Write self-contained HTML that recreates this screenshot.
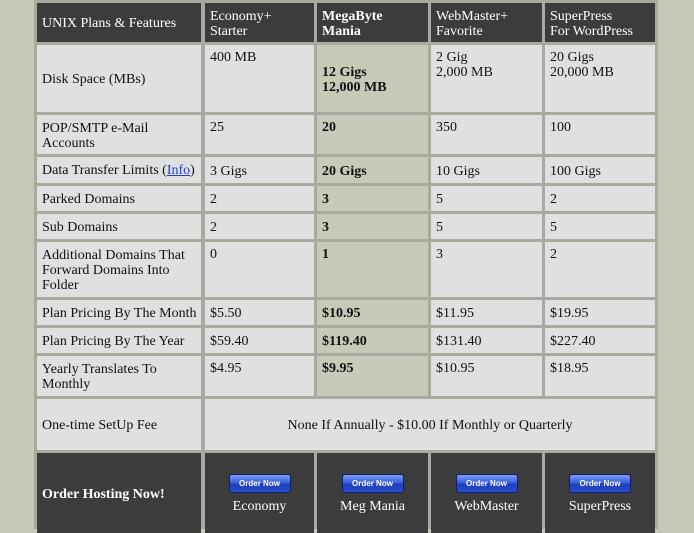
<!DOCTYPE html>
<html><head><meta charset="utf-8"><style>
html,body{margin:0;padding:0;}
body{width:694px;height:529px;background:#c8c8b8;position:relative;overflow:hidden;font-family:"Liberation Serif",serif;font-size:14px;line-height:15px;color:#111;}
#t{position:absolute;left:34px;top:0;width:624px;height:529px;background:#a9a9a0;}
.c{position:absolute;background:#e0e0e0;box-sizing:border-box;padding:5px 5px 3px;display:flex;flex-direction:column;justify-content:flex-start;white-space:nowrap;}
.m{justify-content:center;}
.h{background:#3c3c3c;color:#fff;}
.g{background:#c9c9b9;font-weight:bold;}
.b{font-weight:bold;}
a{color:#1a3fd0;text-decoration:underline;}
.btn{width:60px;height:17px;border-radius:3px;background:linear-gradient(#7d9cf0,#3a5fd8 45%,#1d3fb8 55%,#2a4ed0);border:1px solid #0e1f70;color:#fff;font-family:"Liberation Sans",sans-serif;font-weight:bold;font-size:8px;line-height:17px;text-align:center;margin:0 auto 6px;}
.o{align-items:center;justify-content:center;text-align:center;}
</style></head><body>
<div id="t"></div>
<div class="c h m" style="left:37px;top:3px;width:164px;height:39px;">UNIX Plans &amp; Features</div>
<div class="c h" style="left:205px;top:3px;width:109px;height:39px;padding-top:6px">Economy+<br>Starter</div>
<div class="c h b" style="left:317px;top:3px;width:111px;height:39px;padding-top:6px">MegaByte<br>Mania</div>
<div class="c h" style="left:431px;top:3px;width:111px;height:39px;padding-top:6px">WebMaster+<br>Favorite</div>
<div class="c h" style="left:545px;top:3px;width:110px;height:39px;padding-top:6px">SuperPress<br>For WordPress</div>
<div class="c m" style="left:37px;top:45px;width:164px;height:67px;">Disk Space (MBs)</div>
<div class="c" style="left:205px;top:45px;width:109px;height:67px;">400 MB</div>
<div class="c g m" style="left:317px;top:45px;width:111px;height:67px;">12 Gigs<br>12,000 MB</div>
<div class="c" style="left:431px;top:45px;width:111px;height:67px;">2 Gig<br>2,000 MB</div>
<div class="c" style="left:545px;top:45px;width:110px;height:67px;">20 Gigs<br>20,000 MB</div>
<div class="c m" style="left:37px;top:115px;width:164px;height:39px;">POP/SMTP e-Mail<br>Accounts</div>
<div class="c" style="left:205px;top:115px;width:109px;height:39px;">25</div>
<div class="c g" style="left:317px;top:115px;width:111px;height:39px;">20</div>
<div class="c" style="left:431px;top:115px;width:111px;height:39px;">350</div>
<div class="c" style="left:545px;top:115px;width:110px;height:39px;">100</div>
<div class="c m" style="left:37px;top:157px;width:164px;height:26px;display:block;padding-top:6px">Data Transfer Limits (<a>Info</a>)</div>
<div class="c m" style="left:205px;top:157px;width:109px;height:26px;">3 Gigs</div>
<div class="c g m" style="left:317px;top:157px;width:111px;height:26px;">20 Gigs</div>
<div class="c m" style="left:431px;top:157px;width:111px;height:26px;">10 Gigs</div>
<div class="c m" style="left:545px;top:157px;width:110px;height:26px;">100 Gigs</div>
<div class="c m" style="left:37px;top:186px;width:164px;height:25px;">Parked Domains</div>
<div class="c m" style="left:205px;top:186px;width:109px;height:25px;">2</div>
<div class="c g m" style="left:317px;top:186px;width:111px;height:25px;">3</div>
<div class="c m" style="left:431px;top:186px;width:111px;height:25px;">5</div>
<div class="c m" style="left:545px;top:186px;width:110px;height:25px;">2</div>
<div class="c m" style="left:37px;top:214px;width:164px;height:25px;">Sub Domains</div>
<div class="c m" style="left:205px;top:214px;width:109px;height:25px;">2</div>
<div class="c g m" style="left:317px;top:214px;width:111px;height:25px;">3</div>
<div class="c m" style="left:431px;top:214px;width:111px;height:25px;">5</div>
<div class="c m" style="left:545px;top:214px;width:110px;height:25px;">5</div>
<div class="c m" style="left:37px;top:242px;width:164px;height:55px;">Additional Domains That<br>Forward Domains Into<br>Folder</div>
<div class="c" style="left:205px;top:242px;width:109px;height:55px;">0</div>
<div class="c g" style="left:317px;top:242px;width:111px;height:55px;">1</div>
<div class="c" style="left:431px;top:242px;width:111px;height:55px;">3</div>
<div class="c" style="left:545px;top:242px;width:110px;height:55px;">2</div>
<div class="c m" style="left:37px;top:300px;width:164px;height:25px;">Plan Pricing By The Month</div>
<div class="c m" style="left:205px;top:300px;width:109px;height:25px;">$5.50</div>
<div class="c g m" style="left:317px;top:300px;width:111px;height:25px;">$10.95</div>
<div class="c m" style="left:431px;top:300px;width:111px;height:25px;">$11.95</div>
<div class="c m" style="left:545px;top:300px;width:110px;height:25px;">$19.95</div>
<div class="c m" style="left:37px;top:328px;width:164px;height:25px;">Plan Pricing By The Year</div>
<div class="c m" style="left:205px;top:328px;width:109px;height:25px;">$59.40</div>
<div class="c g m" style="left:317px;top:328px;width:111px;height:25px;">$119.40</div>
<div class="c m" style="left:431px;top:328px;width:111px;height:25px;">$131.40</div>
<div class="c m" style="left:545px;top:328px;width:110px;height:25px;">$227.40</div>
<div class="c m" style="left:37px;top:356px;width:164px;height:40px;">Yearly Translates To<br>Monthly</div>
<div class="c" style="left:205px;top:356px;width:109px;height:40px;">$4.95</div>
<div class="c g" style="left:317px;top:356px;width:111px;height:40px;">$9.95</div>
<div class="c" style="left:431px;top:356px;width:111px;height:40px;">$10.95</div>
<div class="c" style="left:545px;top:356px;width:110px;height:40px;">$18.95</div>
<div class="c m" style="left:37px;top:399px;width:164px;height:51px;">One-time SetUp Fee</div>
<div class="c o" style="left:205px;top:399px;width:450px;height:51px;">None If Annually - $10.00 If Monthly or Quarterly</div>
<div class="c h m b" style="left:37px;top:453px;width:164px;height:80px;padding-bottom:3px">Order Hosting Now!</div>
<div class="c h o" style="left:205px;top:453px;width:109px;height:80px;padding-bottom:3px"><div class="btn">Order Now</div>Economy</div>
<div class="c h o" style="left:317px;top:453px;width:111px;height:80px;padding-bottom:3px"><div class="btn">Order Now</div>Meg Mania</div>
<div class="c h o" style="left:431px;top:453px;width:111px;height:80px;padding-bottom:3px"><div class="btn">Order Now</div>WebMaster</div>
<div class="c h o" style="left:545px;top:453px;width:110px;height:80px;padding-bottom:3px"><div class="btn">Order Now</div>SuperPress</div>
</body></html>
